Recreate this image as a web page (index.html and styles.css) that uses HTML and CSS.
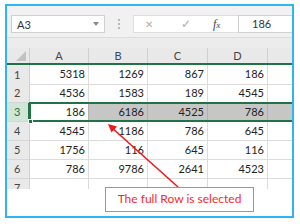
FILE: index.html
```html
<!DOCTYPE html>
<html>
<head>
<meta charset="utf-8">
<link rel="stylesheet" href="styles.css">
</head>
<body>
<div class="frame">
  <div class="toolbar">
    <div class="namebox"><span>A3</span><span class="caret"></span></div>
    <div class="dots"><i></i><i></i><i></i></div>
    <div class="fbtns">
      <span class="btn x">&#x2715;</span>
      <span class="btn ok">&#x2713;</span>
      <span class="btn fx"><i>f</i><i class="sx">x</i></span>
    </div>
    <div class="fbox">186</div>
  </div>
  <div class="band"></div>
  <div class="sheet">
    <div class="row head">
      <div class="corner"><span class="tri"></span></div>
      <div class="ch">A</div><div class="ch">B</div><div class="ch">C</div><div class="ch">D</div><div class="ch last"></div>
    </div>
    <div class="row"><div class="rh">1</div><div class="c">5318</div><div class="c">1269</div><div class="c">867</div><div class="c">186</div><div class="c e"></div></div>
    <div class="row"><div class="rh">2</div><div class="c">4536</div><div class="c">1583</div><div class="c">189</div><div class="c">4545</div><div class="c e"></div></div>
    <div class="row sel"><div class="rh">3</div><div class="c act">186</div><div class="c">6186</div><div class="c">4525</div><div class="c">786</div><div class="c e"></div><span class="handle"></span></div>
    <div class="row"><div class="rh">4</div><div class="c">4545</div><div class="c">1186</div><div class="c">786</div><div class="c">645</div><div class="c e"></div></div>
    <div class="row"><div class="rh">5</div><div class="c">1756</div><div class="c">116</div><div class="c">645</div><div class="c">116</div><div class="c e"></div></div>
    <div class="row"><div class="rh">6</div><div class="c">786</div><div class="c">9786</div><div class="c">2641</div><div class="c">4523</div><div class="c e"></div></div>
    <div class="row"><div class="rh">7</div><div class="c"></div><div class="c"></div><div class="c"></div><div class="c"></div><div class="c e"></div></div>
  </div>
  <svg class="arrow" width="285" height="210" viewBox="0 0 285 210">
    <line x1="104" y1="121" x2="171" y2="181" stroke="#f01818" stroke-width="1.6"/>
    <polygon points="101,118 110,120.5 104.5,126.5" fill="#f01818"/>
  </svg>
  <div class="callout">The full Row is selected</div>
</div>
</body>
</html>
```
FILE: styles.css
```css
* { box-sizing: border-box; }
html, body { margin: 0; padding: 0; background: #fff; }
body { font-family: Lato, "Open Sans", sans-serif; }

.frame {
  position: relative;
  margin: 4px 0 0 5px;
  width: 289px;
  height: 214px;
  border: 2px solid #2db6f2;
  background: #fff;
  overflow: hidden;
}

.toolbar {
  height: 31px;
  background: #f1f1f1;
  display: flex;
  align-items: flex-start;
  padding-top: 9px;
  padding-left: 4px;
}
.namebox {
  width: 94px;
  height: 18px;
  background: #fff;
  border: 1px solid #d0d0d0;
  display: flex;
  align-items: center;
  justify-content: space-between;
  padding: 0 5px 0 5px;
  font-size: 11px;
  color: #333;
}
.caret {
  width: 0; height: 0;
  border-left: 3px solid transparent;
  border-right: 3px solid transparent;
  border-top: 4px solid #8a8a8a;
}
.dots {
  width: 28px;
  height: 18px;
  display: flex;
  flex-direction: column;
  align-items: center;
  justify-content: center;
  gap: 2px;
}
.dots i { display: block; width: 2px; height: 2px; background: #b8b8b8; }
.fbtns {
  width: 105px;
  height: 18px;
  background: #fff;
  border: 1px solid #dedede;
  border-right: none;
  display: flex;
  align-items: center;
  position: relative;
}
.btn { position: absolute; top: 1px; font-size: 11px; line-height: 14px; color: #b0b0b0; }
.btn.x { left: 11px; font-size: 10px; }
.btn.ok { left: 47px; font-size: 12px; }
.btn.fx { left: 79px; color: #444; font-family: "Liberation Serif", serif; font-size: 12px; }
.btn.fx .sx { font-size: 9px; }
.fbox {
  flex: 1;
  height: 18px;
  background: #fff;
  border: 1px solid #d0d0d0;
  border-right: none;
  font-size: 11px;
  color: #333;
  line-height: 16px;
  padding-left: 13px;
}

.band {
  height: 11px;
  background: #ececec;
  border-top: 1px solid #dcdcdc;
}

.sheet {
  height: 141px;
  overflow: hidden;
  background: #fff;
}
.row {
  position: relative;
  display: grid;
  grid-template-columns: 23px 59px 59px 60px 60px 1fr;
  height: 19px;
  font-size: 11px;
  color: #222;
}
.row.head {
  height: 17px;
  border-bottom: 2px solid #217346;
}
.corner {
  background: #e9e9e9;
  border-right: 1px solid #d0d0d0;
  position: relative;
}
.tri {
  position: absolute;
  right: 3px; bottom: 2px;
  width: 0; height: 0;
  border-left: 10px solid transparent;
  border-bottom: 10px solid #c2c2c2;
}
.ch {
  background: #e9e9e9;
  border-right: 1px solid #d0d0d0;
  text-align: center;
  line-height: 15px;
  color: #444;
}
.ch.last { border-right: none; }
.rh {
  background: #e9e9e9;
  border-right: 1px solid #d0d0d0;
  border-bottom: 1px solid #d6d6d6;
  padding-left: 7px;
  line-height: 18px;
  color: #444;
}
.c {
  border-right: 1px solid #dcdcdc;
  border-bottom: 1px solid #dcdcdc;
  text-align: right;
  padding-right: 3px;
  line-height: 18px;
}
.c.e { border-right: none; }
.row:first-child + .row .rh { line-height: 19px; }

.row.sel .rh { background: #d2e6d8; color: #217346; border-right: 2px solid #217346; }
.row.sel .c { background: #c6c6c6; border-right-color: #b0b0b0; }
.row.sel .c.act { background: #fff; }
.row.sel::after {
  content: "";
  position: absolute;
  left: 22px; right: 0; top: -1px; bottom: 0;
  border: 2px solid #217346;
  border-right: none;
  pointer-events: none;
}
.handle {
  position: absolute;
  left: 21px; bottom: -2px;
  width: 5px; height: 5px;
  background: #217346;
  border: 1px solid #fff;
  z-index: 2;
}

.arrow { position: absolute; left: 0; top: 0; }
.callout {
  position: absolute;
  left: 98px;
  top: 181px;
  width: 149px;
  height: 25px;
  border: 1.5px solid #f07272;
  background: #fff;
  color: #f42a2a;
  font-size: 12px;
  line-height: 22px;
  text-align: center;
}
```
